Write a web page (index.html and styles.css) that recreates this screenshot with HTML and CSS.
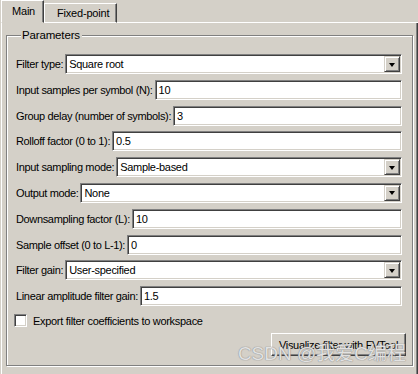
FILE: index.html
```html
<!DOCTYPE html>
<html>
<head>
<meta charset="utf-8">
<link rel="stylesheet" href="styles.css">
</head>
<body>
<div class="dialog">
  <div class="tabs">
    <div class="tab tab-active">Main</div>
    <div class="tab">Fixed-point</div>
    <div class="tab-fill"></div>
  </div>
  <div class="panel">
    <div class="group">
      <div class="group-title">Parameters</div>
      <div class="rows">
        <div class="row"><span class="lbl">Filter type:</span><div class="field select"><span class="val">Square root</span><span class="drop"><span class="arrow"></span></span></div></div>
        <div class="row"><span class="lbl">Input samples per symbol (N):</span><div class="field"><span class="val">10</span></div></div>
        <div class="row"><span class="lbl">Group delay (number of symbols):</span><div class="field"><span class="val">3</span></div></div>
        <div class="row"><span class="lbl">Rolloff factor (0 to 1):</span><div class="field"><span class="val">0.5</span></div></div>
        <div class="row"><span class="lbl">Input sampling mode:</span><div class="field select"><span class="val">Sample-based</span><span class="drop"><span class="arrow"></span></span></div></div>
        <div class="row"><span class="lbl">Output mode:</span><div class="field select"><span class="val">None</span><span class="drop"><span class="arrow"></span></span></div></div>
        <div class="row"><span class="lbl">Downsampling factor (L):</span><div class="field"><span class="val">10</span></div></div>
        <div class="row"><span class="lbl">Sample offset (0 to L-1):</span><div class="field"><span class="val">0</span></div></div>
        <div class="row"><span class="lbl">Filter gain:</span><div class="field select"><span class="val">User-specified</span><span class="drop"><span class="arrow"></span></span></div></div>
        <div class="row"><span class="lbl">Linear amplitude filter gain:</span><div class="field"><span class="val">1.5</span></div></div>
      </div>
      <div class="check-row"><span class="checkbox"></span><span class="check-lbl">Export filter coefficients to workspace</span></div>
      <div class="btn-row">
        <div class="btn">Visualize filter with FVTool</div>
        <div class="watermark">CSDN @我爱C编程</div>
      </div>
    </div>
  </div>
</div>
</body>
</html>
```
FILE: styles.css
```css
html, body {
  margin: 0;
  padding: 0;
  background: #d4d0c8;
  width: 418px;
  height: 374px;
  overflow: hidden;
  font-family: "Liberation Sans", Arial, sans-serif;
  font-size: 10.5px;
  letter-spacing: -0.15px;
  color: #000;
}

.dialog {
  display: flex;
  flex-direction: column;
  height: 374px;
  padding-left: 1px;
  box-sizing: border-box;
}

.tabs {
  display: flex;
  align-items: flex-end;
  height: 23px;
}

.tab {
  height: 18px;
  line-height: 19px;
  padding: 0 7px 0 12px;
  border-top: 1px solid #fff;
  border-left: 1px solid #fff;
  border-right: 1px solid #404040;
  box-shadow: inset -1px 0 0 #808080;
  border-bottom: 1px solid #fff;
  font-size: 11px;
  letter-spacing: -0.2px;
}

.tab-active {
  height: 21px;
  line-height: 21px;
  border-bottom: 1px solid #d4d0c8;
  padding: 0 8px 0 10px;
}

.tab-fill {
  flex: 1;
  height: 0;
  border-bottom: 1px solid #fff;
}

.panel {
  flex: 1;
  border-left: 1px solid #fff;
  border-right: 1px solid #404040;
  box-shadow: inset -1px 0 0 #808080;
  padding: 12px 4px 0 4px;
  display: flex;
  flex-direction: column;
}

.group {
  border: 1px solid #808080;
  box-shadow: inset 1px 1px 0 #fff, 1px 1px 0 #fff;
  height: 331px;
  box-sizing: border-box;
  padding: 0 10px 0 9px;
  display: flex;
  flex-direction: column;
}

.group-title {
  align-self: flex-start;
  margin: -7px 0 0 5px;
  padding: 0 2px 0 1px;
  background: #d4d0c8;
  font-size: 11.5px;
  line-height: 13px;
}

.rows {
  margin-top: 12px;
  display: flex;
  flex-direction: column;
  gap: 5.8px;
}

.row {
  display: flex;
  align-items: center;
  height: 20px;
}

.lbl {
  white-space: nowrap;
  margin-right: 2px;
  font-size: 11px;
  letter-spacing: -0.35px;
}

.field {
  flex: 1;
  height: 20px;
  box-sizing: border-box;
  background: #fff;
  border-top: 1px solid #808080;
  border-left: 1px solid #808080;
  border-right: 1px solid #fff;
  border-bottom: 1px solid #fff;
  box-shadow: inset 1px 1px 0 #404040, inset -1px -1px 0 #d4d0c8;
  display: flex;
  align-items: center;
  padding-left: 3px;
}

.val {
  flex: 1;
  font-size: 11px;
  letter-spacing: -0.3px;
}

.drop {
  width: 16px;
  height: 16px;
  box-sizing: border-box;
  margin-right: 1px;
  background: #d4d0c8;
  border-top: 1px solid #d4d0c8;
  border-left: 1px solid #d4d0c8;
  border-right: 1px solid #404040;
  border-bottom: 1px solid #404040;
  box-shadow: inset 1px 1px 0 #fff, inset -1px -1px 0 #808080;
  display: flex;
  align-items: center;
  justify-content: center;
}

.arrow {
  width: 0;
  height: 0;
  border-left: 3.5px solid transparent;
  border-right: 3.5px solid transparent;
  border-top: 4px solid #000;
  margin-top: 1px;
}

.check-row {
  display: flex;
  align-items: center;
  margin-top: 8px;
  margin-left: -2px;
  height: 13px;
}

.checkbox {
  width: 13px;
  height: 13px;
  box-sizing: border-box;
  background: #fff;
  border-top: 1px solid #808080;
  border-left: 1px solid #808080;
  border-right: 1px solid #fff;
  border-bottom: 1px solid #fff;
  box-shadow: inset 1px 1px 0 #404040, inset -1px -1px 0 #d4d0c8;
}

.check-lbl {
  margin-left: 6px;
  font-size: 11px;
  letter-spacing: -0.3px;
}

.btn-row {
  position: relative;
  display: flex;
  justify-content: flex-end;
  margin-top: 6px;
  margin-right: -4px;
}

.btn {
  width: 135px;
  height: 23px;
  box-sizing: border-box;
  border-top: 1px solid #fff;
  border-left: 1px solid #fff;
  border-right: 1px solid #404040;
  border-bottom: 1px solid #404040;
  box-shadow: inset -1px -1px 0 #808080;
  display: flex;
  align-items: center;
  justify-content: center;
  white-space: nowrap;
  font-size: 11px;
  letter-spacing: -0.3px;
  padding-top: 1px;
}

.watermark {
  position: absolute;
  right: 0;
  top: 11px;
  font-size: 19px;
  line-height: 20px;
  letter-spacing: 0;
  color: rgba(255, 255, 255, 0.75);
  text-shadow: 0 0 1px #8a8a8a, 0 0 1px #8a8a8a;
  font-family: "Liberation Sans", "Noto Sans CJK SC", sans-serif;
  white-space: nowrap;
}
```
